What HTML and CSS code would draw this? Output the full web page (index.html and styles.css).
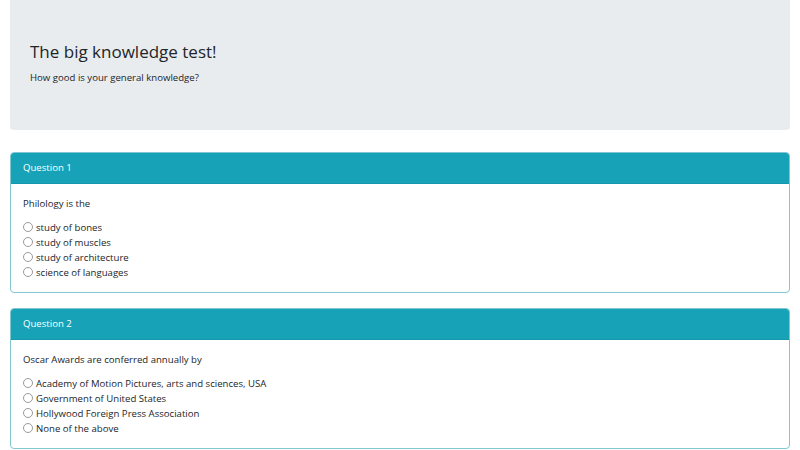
FILE: index.html
```html
<!DOCTYPE html>
<html lang="en">
<head>
  <meta charset="UTF-8">
  <title>The big knowledge test!</title>
  <link rel="stylesheet" href="styles.css">
</head>
<body>
<div class="page">

  <div class="jumbotron">
    <h1>The big knowledge test!</h1>
    <p>How good is your general knowledge?</p>
  </div>

  <div class="card">
    <div class="card-header">Question 1</div>
    <div class="card-body">
      <p class="question">Philology is the</p>
      <label><input type="radio" name="q1"> study of bones</label>
      <label><input type="radio" name="q1"> study of muscles</label>
      <label><input type="radio" name="q1"> study of architecture</label>
      <label><input type="radio" name="q1"> science of languages</label>
    </div>
  </div>

  <div class="card">
    <div class="card-header">Question 2</div>
    <div class="card-body">
      <p class="question">Oscar Awards are conferred annually by</p>
      <label><input type="radio" name="q2"> Academy of Motion Pictures, arts and sciences, USA</label>
      <label><input type="radio" name="q2"> Government of United States</label>
      <label><input type="radio" name="q2"> Hollywood Foreign Press Association</label>
      <label><input type="radio" name="q2"> None of the above</label>
    </div>
  </div>

</div>
</body>
</html>
```

FILE: styles.css
```css
body {
  margin: 0;
  font-family: "Open Sans", "Noto Sans", sans-serif;
  font-size: 9.6px;
  color: #212529;
  background: #fff;
}
.page {
  padding: 0 10px;
}
.jumbotron {
  background-color: #e9ecef;
  height: 130px;
  box-sizing: border-box;
  padding: 40px 20px 0;
  border-radius: 0 0 4px 4px;
  margin-bottom: 22px;
}
.jumbotron h1 {
  margin: 0 0 7px;
  font-size: 17px;
  font-weight: 400;
  line-height: 24px;
}
.jumbotron p {
  margin: 0;
  line-height: 14px;
}
.card {
  border: 1px solid #80c7d1;
  border-radius: 4px;
  margin-bottom: 15px;
  overflow: hidden;
}
.card-header {
  background-color: #17a2b8;
  color: #fff;
  height: 30px;
  line-height: 30px;
  padding: 0 12px;
  border-bottom: 1px solid #1596aa;
}
.card-body {
  padding: 13px 12px 12px;
}
.question {
  margin: 0 0 9px;
  line-height: 14px;
}
label {
  display: flex;
  align-items: center;
  line-height: 15px;
}
input[type=radio] {
  appearance: none;
  width: 10px;
  height: 10px;
  margin: 0 3px 2px 0;
  border: 1px solid #9a9a9a;
  border-radius: 50%;
  background: #fff;
}
```
